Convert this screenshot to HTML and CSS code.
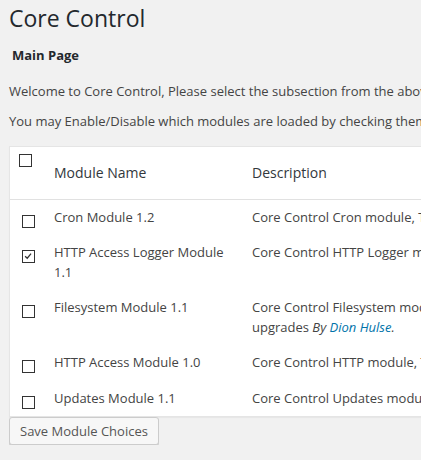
FILE: index.html
```html
<!DOCTYPE html>
<html lang="en">
<head>
<meta charset="utf-8">
<title>Core Control</title>
<link rel="stylesheet" href="styles.css">
</head>
<body>
<div class="wrap">
  <h1 class="page-title">Core Control</h1>
  <h3 class="section-title">Main Page</h3>
  <p class="intro">Welcome to Core Control, Please select the subsection from the above menu which you would like to modify</p>
  <p class="intro">You may Enable/Disable which modules are loaded by checking them in the following list:</p>

  <form class="modules-form">
    <table class="modules">
      <colgroup>
        <col class="c-check">
        <col class="c-name">
        <col class="c-desc">
      </colgroup>
      <thead>
        <tr>
          <th class="check-col"><span class="cb"></span></th>
          <th class="head-cell">Module Name</th>
          <th class="head-cell">Description</th>
        </tr>
      </thead>
      <tbody>
        <tr>
          <td class="check-col"><span class="cb"></span></td>
          <td class="name">Cron Module 1.2</td>
          <td class="desc">Core Control Cron module, This allows you to manually run WordPress Cron Jobs and to diagnose Cron issues. <em>By <a href="#">Dion Hulse</a>.</em></td>
        </tr>
        <tr>
          <td class="check-col"><span class="cb checked"><svg viewBox="0 0 13 13" width="11" height="11"><polyline points="2.5,6.2 5,8.6 9.5,3.2" fill="none" stroke="#333" stroke-width="1.5"/></svg></span></td>
          <td class="name">HTTP Access Logger Module 1.1</td>
          <td class="desc">Core Control HTTP Logger module, This allows you to Log external connections which WordPress makes. <em>By <a href="#">Dion Hulse</a>.</em></td>
        </tr>
        <tr>
          <td class="check-col"><span class="cb"></span></td>
          <td class="name">Filesystem Module 1.1</td>
          <td class="desc">Core Control Filesystem module, This allows you to Enable/Disable the different Filesystem access methods which WordPress supports for<br>upgrades <em>By <a href="#">Dion Hulse</a>.</em></td>
        </tr>
        <tr>
          <td class="check-col"><span class="cb"></span></td>
          <td class="name">HTTP Access Module 1.0</td>
          <td class="desc">Core Control HTTP module, This allows you to Enable/Disable the different HTTP Access methods which WordPress 2.7+ supports <em>By <a href="#">Dion Hulse</a>.</em></td>
        </tr>
        <tr>
          <td class="check-col"><span class="cb"></span></td>
          <td class="name">Updates Module 1.1</td>
          <td class="desc">Core Control Updates module, This allows you to Disable Plugin/Theme/Core update checking, or to force a check to take place. <em>By <a href="#">Dion Hulse</a>.</em></td>
        </tr>
      </tbody>
    </table>
    <div class="actions">
      <button type="button" class="button">Save Module Choices</button>
    </div>
  </form>
</div>
</body>
</html>
```

FILE: styles.css
```css
html, body {
  margin: 0;
  padding: 0;
  overflow: hidden;
}
body {
  background: #f1f1f1;
  color: #444;
  font-family: "Open Sans", "Liberation Sans", sans-serif;
  font-size: 13px;
}
.wrap {
  padding: 0 0 0 9px;
}
.page-title {
  margin: 0;
  padding: 4px 0 0;
  font-size: 23px;
  line-height: 29px;
  font-weight: 400;
  color: #23282d;
}
.section-title {
  margin: 13px 0 0 3px;
  font-size: 13px;
  line-height: 19.5px;
  font-weight: 700;
  color: #23282d;
}
.intro {
  margin: 17px 0 0;
  line-height: 16px;
  white-space: nowrap;
}
.intro + .intro {
  margin-top: 14px;
}
.modules-form {
  margin: 17px 0 0;
}
.modules {
  width: 1000px;
  table-layout: fixed;
  border-collapse: separate;
  border-spacing: 0;
  border: 1px solid #e5e5e5;
  background: #fff;
  box-shadow: 0 1px 1px rgba(0,0,0,.04);
}
.c-check { width: 34px; }
.c-name { width: 198px; }
.head-cell {
  height: 36px;
  padding: 8px 10px;
  font-size: 14px;
  font-weight: 400;
  line-height: 19.6px;
  text-align: left;
  vertical-align: middle;
  color: #32373c;
  border-bottom: 1px solid #e1e1e1;
}
thead .check-col {
  padding: 7px 0 0 9px;
  vertical-align: top;
  text-align: left;
  border-bottom: 1px solid #e1e1e1;
}
tbody td {
  padding: 8px 10px;
  line-height: 19.5px;
  vertical-align: top;
}
tbody .check-col {
  padding: 15px 0 0 12px;
}
.desc {
  white-space: nowrap;
}
.desc a {
  color: #0073aa;
  text-decoration: none;
}
.cb {
  display: block;
  width: 13px;
  height: 13px;
  box-sizing: border-box;
  border: 1px solid #333;
  background: #fff;
}
.cb svg {
  display: block;
}
.actions {
  margin: 0;
}
.button {
  display: inline-block;
  height: 28px;
  margin: 0;
  padding: 0 10px 1px;
  font-family: "Open Sans", "Liberation Sans", sans-serif;
  font-size: 13px;
  line-height: 26px;
  color: #555;
  background: #f7f7f7;
  border: 1px solid #ccc;
  border-radius: 3px;
  box-shadow: 0 1px 0 #ccc;
  cursor: pointer;
}
```
